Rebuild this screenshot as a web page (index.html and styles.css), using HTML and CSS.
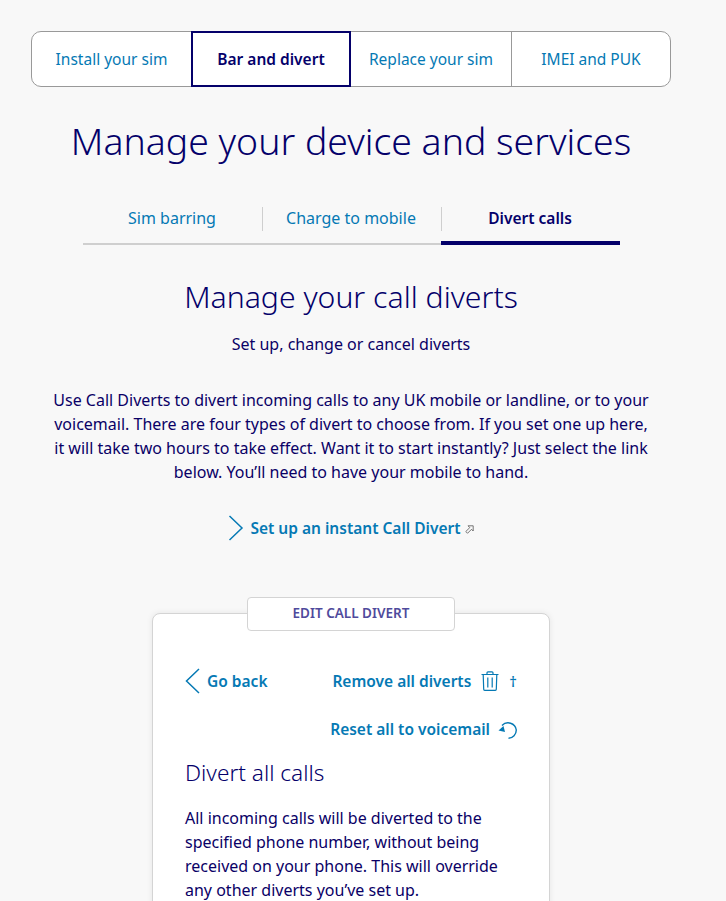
FILE: index.html
```html
<!DOCTYPE html>
<html lang="en">
<head>
<meta charset="utf-8">
<title>Manage your device and services</title>
<link rel="stylesheet" href="styles.css">
</head>
<body>
<main class="page">
  <nav class="top-tabs">
    <a class="top-tab">Install your sim</a>
    <a class="top-tab active">Bar and divert</a>
    <a class="top-tab">Replace your sim</a>
    <a class="top-tab">IMEI and PUK</a>
  </nav>
  <h1 class="title">Manage your device and services</h1>
  <nav class="sub-tabs">
    <a class="sub-tab"><span class="sub-label">Sim barring</span></a>
    <a class="sub-tab"><span class="sub-label">Charge to mobile</span></a>
    <a class="sub-tab active"><span class="sub-label">Divert calls</span></a>
  </nav>
  <h2 class="section-title">Manage your call diverts</h2>
  <p class="section-sub">Set up, change or cancel diverts</p>
  <p class="intro">Use Call Diverts to divert incoming calls to any UK mobile or landline, or to your voicemail. There are four types of divert to choose from. If you set one up here, it will take two hours to take effect. Want it to start instantly? Just select the link below. You’ll need to have your mobile to hand.</p>
  <a class="instant-link">
    <svg class="chev-big" width="16" height="26" viewBox="0 0 16 26"><path d="M1.500 1l12.500 12L1.500 25" fill="none" stroke="currentColor" stroke-width="1.500"/></svg>
    <span>Set up an instant Call Divert</span>
    <svg class="ext" width="9" height="9" viewBox="0 0 9 9"><path d="M3 .8h5.200V6L6.500 4.300 2.500 8.300 .8 6.500l4-3.900z" fill="none" stroke="#555" stroke-width=".8"/></svg>
  </a>
  <section class="card">
    <div class="card-tag">EDIT CALL DIVERT</div>
    <div class="card-actions">
      <a class="action back">
        <svg width="15" height="26" viewBox="0 0 15 26"><path d="M14 1L1.500 13 14 25" fill="none" stroke="currentColor" stroke-width="1.500"/></svg>
        <span>Go back</span>
      </a>
      <a class="action remove">
        <span>Remove all diverts</span>
        <svg class="trash" width="18" height="20" viewBox="0 0 18 20"><path d="M.5 3.500h17M2.200 3.500l.5 14.800a1 1 0 0 0 1 1h10.600a1 1 0 0 0 1-1l.5-14.800M6 3.500V1.800a1 1 0 0 1 1-1h4a1 1 0 0 1 1 1v1.700M6.800 6.500v10M11.200 6.500v10" fill="none" stroke="currentColor" stroke-width="1.200"/></svg>
        <span class="dagger">†</span>
      </a>
    </div>
    <a class="action reset">
      <span>Reset all to voicemail</span>
      <svg width="20" height="20" viewBox="0 0 20 20"><path d="M4 6.500A8.300 8.300 0 0 1 18.300 11 8.300 8.300 0 0 1 10.500 19.300" fill="none" stroke="currentColor" stroke-width="1.400"/><path d="M.5 11.500l5-4.500 1.500 6z" fill="currentColor"/></svg>
    </a>
    <h3 class="card-title">Divert all calls</h3>
    <p class="card-text">All incoming calls will be diverted to the specified phone number, without being received on your phone. This will override any other diverts you’ve set up.</p>
  </section>
</main>
</body>
</html>
```
FILE: styles.css
```css
* { box-sizing: border-box; }
html, body { margin: 0; height: 901px; overflow: hidden; }
body { background: #f8f8f8; color: #0a0066; font-family: "Noto Sans", sans-serif; font-size: 16px; }
.page { width: 702px; display: flex; flex-direction: column; align-items: center; padding-top: 31px; }
a { color: #0579b4; }

.top-tabs { display: grid; grid-template-columns: 159px 160px 160px 159px; width: 640px; height: 56px; background: #fff; border: 1px solid #999; border-radius: 10px; }
.top-tab { display: flex; align-items: center; justify-content: center; padding-bottom: 1px; font-size: 15.500px; }
.top-tab.active { margin: -1px 0; border: 2px solid #04006a; color: #04006a; font-weight: 600; }
.top-tab:nth-child(4) { border-left: 1px solid #999; }

.title { margin: 29px 0 0; font-size: 37.400px; line-height: 50px; font-weight: 300; color: #04006a; }

.sub-tabs { display: flex; align-items: flex-end; width: 537px; height: 44px; margin-top: 35px; }
.sub-tab { flex: 1; display: flex; justify-content: center; padding-top: 5px; border-bottom: 2px solid #cfcfcf; position: relative; font-size: 16px; height: 44px; }
.sub-label { line-height: 24px; }
.sub-tab + .sub-tab::before { content: ""; position: absolute; left: 0; top: 6px; height: 24px; border-left: 1px solid #cfcfcf; }
.sub-tab.active { color: #04006a; font-weight: 600; font-size: 15.500px; border-bottom: 4px solid #04006a; }

.section-title { margin: 32px 0 0; font-size: 30.200px; line-height: 40px; font-weight: 300; color: #04006a; }
.section-sub { margin: 15px 0 0; line-height: 24px; }
.intro { width: 606px; margin: 32px 0 0; line-height: 24px; text-align: center; }

.instant-link { display: flex; align-items: center; margin-top: 31px; font-weight: 600; font-size: 15.500px; line-height: 26px; gap: 6px; }
.ext { margin-left: -2px; margin-top: 2px; }

.card { width: 398px; margin: 72px 0 0; padding: 0 31px 24px 32px; background: #fff; border: 1px solid #d4d4d4; border-radius: 8px; box-shadow: 0 0 6px rgba(0,0,0,.08); display: flex; flex-direction: column; position: relative; }
.card-tag { position: absolute; left: 94px; top: -17px; width: 208px; height: 34px; padding-bottom: 2px; display: flex; align-items: center; justify-content: center; background: #fff; border: 1px solid #d4d4d4; border-radius: 4px; font-size: 13.500px; font-weight: 600; color: #4f4a9c; }
.card-actions { display: flex; justify-content: space-between; margin-top: 54px; }
.action { display: flex; align-items: center; font-weight: 600; font-size: 15.500px; line-height: 26px; }
.back { gap: 7px; }
.remove svg { margin-left: 10px; }
.remove { margin-right: 1px; }
.dagger { margin-left: 10px; font-weight: 500; font-size: 15px; }
.reset { align-self: flex-end; gap: 8px; margin-top: 22px; }
.card-title { margin: 15px 0 0; font-size: 22.600px; line-height: 32px; font-weight: 300; color: #04006a; }
.card-text { margin: 17px 0 0; line-height: 24px; }
```
